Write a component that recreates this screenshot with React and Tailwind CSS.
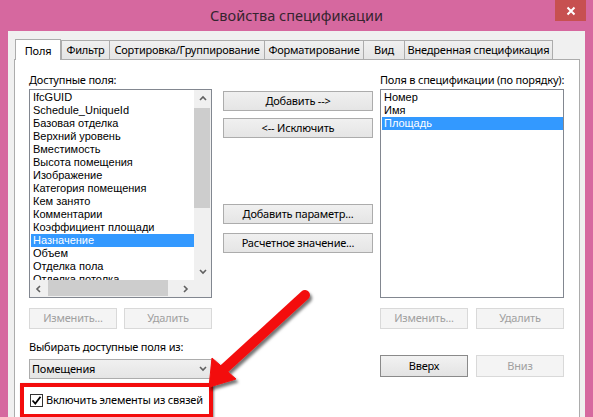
import React from "react";

const leftItems = [
  "IfcGUID",
  "Schedule_UniqueId",
  "Базовая отделка",
  "Верхний уровень",
  "Вместимость",
  "Высота помещения",
  "Изображение",
  "Категория помещения",
  "Кем занято",
  "Комментарии",
  "Коэффициент площади",
  "Назначение",
  "Объем",
  "Отделка пола",
  "Отделка потолка",
];

const rightItems = ["Номер", "Имя", "Площадь"];

function Chevron({ dir }) {
  const pts = {
    up: "1,5 4,2 7,5",
    down: "1,2 4,5 7,2",
    left: "5,1 2,4 5,7",
    right: "2,1 5,4 2,7",
  }[dir];
  return (
    <svg width="8" height="8" viewBox="0 0 8 8">
      <polyline points={pts} fill="none" stroke="#606060" strokeWidth="1.6" />
    </svg>
  );
}

function VScroll() {
  return (
    <div className="w-[17px] bg-[#f0f0f0] flex flex-col">
      <div className="h-[17px] flex items-center justify-center">
        <Chevron dir="up" />
      </div>
      <div className="flex-1 pt-[1px] pr-px">
        <div className="h-[100px] bg-[#cdcdcd]" />
      </div>
      <div className="h-[17px] flex items-center justify-center">
        <Chevron dir="down" />
      </div>
    </div>
  );
}

function HScroll() {
  return (
    <div className="h-[17px] flex">
      <div className="w-[164px] bg-[#f0f0f0] flex">
        <div className="w-[17px] flex items-center justify-center">
          <Chevron dir="left" />
        </div>
        <div className="flex-1 pl-px pb-px">
          <div className="w-[120px] h-full bg-[#cdcdcd]" />
        </div>
        <div className="w-[17px] flex items-center justify-center">
          <Chevron dir="right" />
        </div>
      </div>
      <div className="w-[17px] bg-[#f0f0f0]" />
    </div>
  );
}

function ListBox({ items, selected, scroll }) {
  return (
    <div className="h-[209px] border border-[#828790] bg-white flex flex-col font-['Liberation_Sans',sans-serif] text-[11px] tracking-normal">
      <div className="flex flex-1 min-h-0">
        <div className="flex-1 min-w-0 pl-px pt-px overflow-hidden">
          {items.map((t) => (
            <div
              key={t}
              className={
                "h-[13px] leading-[13px] pl-[2px] whitespace-nowrap " +
                (t === selected ? "bg-[#3399ff] text-white" : "text-black")
              }
            >
              {t}
            </div>
          ))}
        </div>
        {scroll && <VScroll />}
      </div>
      {scroll && <HScroll />}
    </div>
  );
}

function Btn({ children, className = "", disabled, strong }) {
  const look = disabled
    ? "border-[#d9d9d9] bg-[#f4f4f4] text-[#a0a0a0]"
    : strong
    ? "border-[#8a8a8a] bg-gradient-to-b from-[#f2f2f2] to-[#e3e3e3] text-black"
    : "border-[#acacac] bg-gradient-to-b from-[#f0f0f0] to-[#e5e5e5] text-black";
  return (
    <div
      className={
        "border flex items-center justify-center whitespace-nowrap " + look + " " + className
      }
    >
      {children}
    </div>
  );
}

function Tab({ children, active, className = "" }) {
  return active ? (
    <div
      className={
        "h-[21px] -mb-px bg-white border border-b-0 border-[#acacac] flex items-start justify-center pt-[3px] whitespace-nowrap relative z-10 " +
        className
      }
    >
      {children}
    </div>
  ) : (
    <div
      className={
        "h-[19px] -ml-px border border-b-0 border-[#acacac] bg-gradient-to-b from-[#f0f0f0] to-[#e5e5e5] flex items-center justify-center whitespace-nowrap " +
        className
      }
    >
      {children}
    </div>
  );
}

export default function App() {
  return (
    <div className="relative w-[593px] h-[417px] overflow-hidden bg-[#d6689f] font-['Noto_Sans',sans-serif] text-[11px] tracking-[-0.2px] text-black flex flex-col">
      {/* title bar */}
      <div className="relative h-[31px] shrink-0 flex items-center justify-center">
        <span className="text-[14.5px] tracking-normal leading-none text-[#35242e] -mt-[1px]">
          Свойства спецификации
        </span>
        <div className="absolute right-[7px] top-0 w-[31px] h-[21px] bg-[#c75050] flex items-center justify-center">
          <svg width="10" height="10" viewBox="0 0 10 10">
            <path d="M1.5 1.5 L8.5 8.5 M8.5 1.5 L1.5 8.5" stroke="#fff" strokeWidth="2" />
          </svg>
        </div>
      </div>

      {/* dialog body */}
      <div className="flex-1 ml-[8px] mr-[8px] bg-[#f0f0f0] pt-[7px] flex flex-col">
        {/* tabs */}
        <div className="flex items-end pl-[7px] h-[21px] shrink-0">
          <Tab active className="w-[46px]">Поля</Tab>
          <Tab className="w-[49px] ml-0">Фильтр</Tab>
          <Tab className="w-[156px]">Сортировка/Группирование</Tab>
          <Tab className="w-[100px]">Форматирование</Tab>
          <Tab className="w-[42px]">Вид</Tab>
          <Tab className="w-[149px]">Внедренная спецификация</Tab>
        </div>

        {/* tab page */}
        <div className="flex-1 ml-[6px] mr-[5px] bg-white border border-[#acacac] border-b-0 pl-[14px] pt-[12px] flex">
          {/* available fields */}
          <div className="w-[183px] flex flex-col">
            <div className="h-[16px] leading-[16px]">Доступные поля:</div>
            <div className="mt-px">
              <ListBox items={leftItems} selected="Назначение" scroll />
            </div>
            <div className="mt-[10px] flex justify-between">
              <Btn disabled className="w-[88px] h-[21px]">Изменить...</Btn>
              <Btn disabled className="w-[88px] h-[21px]">Удалить</Btn>
            </div>
            <div className="mt-[10px] h-[16px] leading-[16px]">Выбирать доступные поля из:</div>
            <div className="mt-[4px] h-[20px] border border-[#acacac] bg-gradient-to-b from-[#f0f0f0] to-[#e5e5e5] flex items-center justify-between pl-[2px] pr-[4px]">
              <span>Помещения</span>
              <Chevron dir="down" />
            </div>
            <div className="mt-[4px] -ml-[9px] w-[193px] h-[35px] border-4 border-[#f30c0c] shadow-[1px_1px_2px_rgba(0,0,0,0.45)] flex items-center pl-[6px]">
              <div className="w-[13px] h-[13px] border border-[#333] bg-white flex items-center justify-center">
                <svg width="11" height="11" viewBox="0 0 11 11">
                  <path d="M1.5 5.5 L4.3 8.5 L9.5 1.8" fill="none" stroke="#000" strokeWidth="1.8" />
                </svg>
              </div>
              <span className="ml-[3px] whitespace-nowrap">Включить элементы из связей</span>
            </div>
          </div>

          {/* middle buttons */}
          <div className="ml-[11px] w-[150px] flex flex-col pt-[19px]">
            <Btn className="h-[20px]">Добавить --&gt;</Btn>
            <Btn className="h-[20px] mt-[7px]">&lt;-- Исключить</Btn>
            <Btn className="h-[20px] mt-[66px]">Добавить параметр...</Btn>
            <Btn className="h-[20px] mt-[9px]">Расчетное значение...</Btn>
          </div>

          {/* scheduled fields */}
          <div className="ml-[7px] w-[184px] flex flex-col">
            <div className="h-[16px] leading-[16px] whitespace-nowrap">
              Поля в спецификации (по порядку):
            </div>
            <div className="mt-px">
              <ListBox items={rightItems} selected="Площадь" />
            </div>
            <div className="mt-[10px] flex justify-between">
              <Btn disabled className="w-[88px] h-[21px]">Изменить...</Btn>
              <Btn disabled className="w-[88px] h-[21px]">Удалить</Btn>
            </div>
            <div className="mt-[26px] flex justify-between">
              <Btn strong className="w-[88px] h-[22px]">Вверх</Btn>
              <Btn disabled className="w-[88px] h-[22px]">Вниз</Btn>
            </div>
          </div>
        </div>
      </div>

      {/* callout arrow */}
      <svg
        className="absolute left-0 top-0 pointer-events-none"
        width="593"
        height="417"
        viewBox="0 0 593 417"
      >
        <defs>
          <filter id="arrowShadow" x="-20%" y="-20%" width="140%" height="140%">
            <feDropShadow dx="2" dy="3" stdDeviation="1.5" floodColor="#000" floodOpacity="0.55" />
          </filter>
        </defs>
        <g filter="url(#arrowShadow)" fill="#f30c0c" stroke="#f30c0c">
          <line x1="305" y1="295" x2="224" y2="369" strokeWidth="10" strokeLinecap="round" />
          <polygon points="209,387 212,358 236,379" strokeWidth="1" strokeLinejoin="round" />
        </g>
      </svg>
    </div>
  );
}
